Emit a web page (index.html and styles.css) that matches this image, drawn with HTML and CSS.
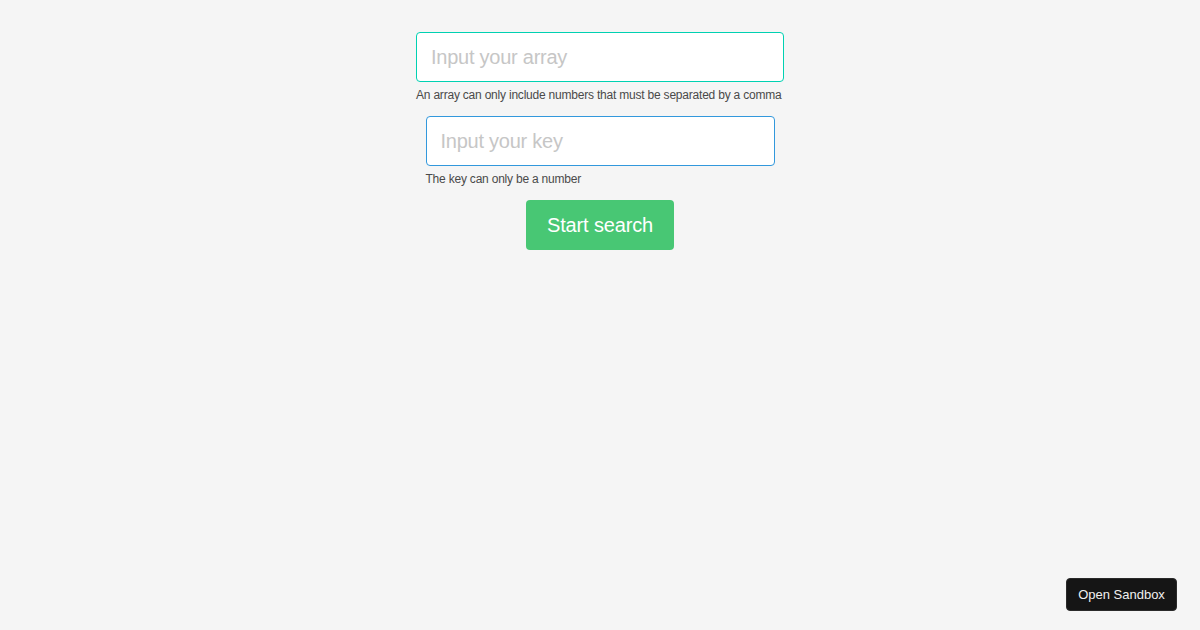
FILE: index.html
```html
<!DOCTYPE html>
<html>
<head>
<meta charset="utf-8">
<link rel="stylesheet" href="styles.css">
</head>
<body>
<main class="page">
  <div class="field field-array">
    <input class="input input-primary" type="text" placeholder="Input your array">
    <p class="help">An array can only include numbers that must be separated by a comma</p>
  </div>
  <div class="field field-key">
    <input class="input input-info" type="text" placeholder="Input your key">
    <p class="help">The key can only be a number</p>
  </div>
  <button class="button-success">Start search</button>
</main>
<a class="sandbox-btn">Open Sandbox</a>
</body>
</html>
```
FILE: styles.css
```css
html, body {
  margin: 0;
  padding: 0;
  height: 100%;
}
body {
  background: #f5f5f5;
  font-family: "Liberation Sans", Arial, sans-serif;
  color: #4a4a4a;
}
.page {
  display: flex;
  flex-direction: column;
  align-items: center;
  padding-top: 32px;
}
.field {
  display: flex;
  flex-direction: column;
  margin-bottom: 12px;
}
.field-array { width: 368px; }
.field-key { width: 349px; }
.input {
  box-sizing: border-box;
  height: 50px;
  width: 100%;
  font-family: "Liberation Sans", Arial, sans-serif;
  font-size: 20px;
  letter-spacing: -0.25px;
  padding: 0 14px;
  border-radius: 4px;
  background: #fff;
  border: 1px solid #dbdbdb;
  outline: none;
  color: #363636;
}
.input::placeholder {
  color: #c6c6c6;
}
.input-primary { border-color: #00d1b2; }
.input-info { border-color: #3298dc; }
.help {
  margin: 4px 0 0;
  font-size: 12px;
  line-height: 18px;
  letter-spacing: -0.21px;
  white-space: nowrap;
  color: #4a4a4a;
}
.button-success {
  box-sizing: border-box;
  width: 148px;
  height: 50px;
  background: #48c774;
  color: #fff;
  border: none;
  border-radius: 4px;
  font-family: "Liberation Sans", Arial, sans-serif;
  font-size: 20px;
  letter-spacing: -0.15px;
  cursor: pointer;
}
.sandbox-btn {
  position: fixed;
  right: 23px;
  bottom: 19px;
  width: 111px;
  height: 33px;
  box-sizing: border-box;
  display: flex;
  align-items: center;
  justify-content: center;
  background: #151515;
  color: #f0f0f0;
  border-radius: 4px;
  font-family: "Liberation Sans", Arial, sans-serif;
  font-size: 13px;
  border: 1px solid #2a2a2a;
}
```
